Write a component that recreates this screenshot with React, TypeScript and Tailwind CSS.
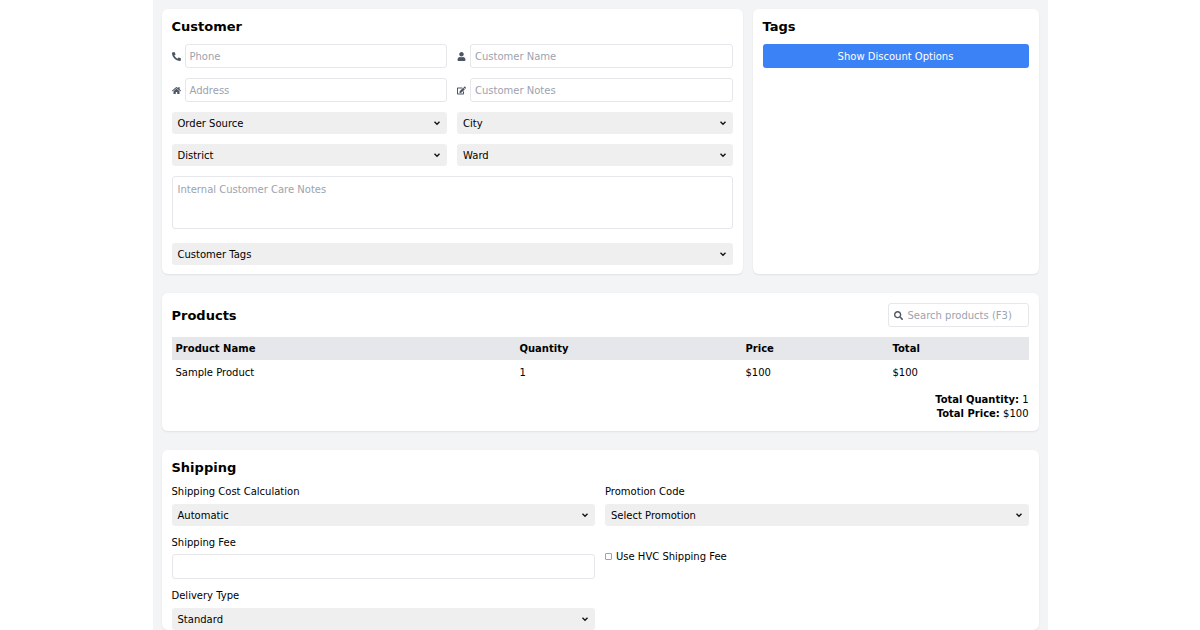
import { FaPhoneAlt, FaUser, FaHome, FaEdit, FaSearch } from "react-icons/fa";

const sel =
  "h-[22px] w-full rounded-[3px] bg-[#efefef] px-[6px] text-[10px] text-black flex items-center justify-between";

function Select({ label }: { label: string }) {
  return (
    <div className={sel}>
      <span>{label}</span>
      <svg width="8" height="8" viewBox="0 0 8 8">
        <path d="M1.5 2.8 L4 5.2 L6.5 2.8" stroke="#111" strokeWidth="1.4" fill="none" />
      </svg>
    </div>
  );
}

function IconInput({ icon: Icon, ph }: { icon: any; ph: string }) {
  return (
    <div className="flex items-center gap-[4px]">
      <Icon className="w-[9px] h-[9px] text-[#4b5563] shrink-0" />
      <div className="h-[24px] flex-1 rounded-[3px] border border-[#e5e7eb] px-[4px] flex items-center text-[10px] text-[#9ca3af]">
        {ph}
      </div>
    </div>
  );
}

const card = "bg-white rounded-[6px] shadow-[0_1px_2px_rgba(0,0,0,0.08)]";

export default function App() {
  return (
    <div
      className="w-[1200px] h-[630px] overflow-hidden bg-white flex justify-center"
      style={{ fontFamily: '"DejaVu Sans", sans-serif' }}
    >
      <div className="w-[895px] bg-[#f3f4f6] px-[9px] pt-[9px] flex flex-col gap-[19px]">
        <div className="grid grid-cols-[581px_1fr] gap-[10px]">
          <div className={`${card} p-[10px] pb-[9px]`}>
            <h2 className="text-[13px] font-bold text-black mt-[1px] mb-[11px] leading-none">Customer</h2>
            <div className="grid grid-cols-2 gap-x-[10px] gap-y-[10px]">
              <IconInput icon={FaPhoneAlt} ph="Phone" />
              <IconInput icon={FaUser} ph="Customer Name" />
              <IconInput icon={FaHome} ph="Address" />
              <IconInput icon={FaEdit} ph="Customer Notes" />
              <Select label="Order Source" />
              <Select label="City" />
              <Select label="District" />
              <Select label="Ward" />
              <div className="col-span-2 h-[53px] rounded-[3px] border border-[#e5e7eb] px-[5px] pt-[5px] text-[10px] text-[#9ca3af]">
                Internal Customer Care Notes
              </div>
              <div className="col-span-2 mt-[4px]">
                <Select label="Customer Tags" />
              </div>
            </div>
          </div>
          <div className={`${card} p-[10px]`}>
            <h2 className="text-[13px] font-bold text-black mt-[1px] mb-[11px] leading-none">Tags</h2>
            <div className="h-[24px] rounded-[3px] bg-[#3b82f6] text-white text-[10px] flex items-center justify-center">
              Show Discount Options
            </div>
          </div>
        </div>

        <div className={`${card} px-[10px] pt-[10px] pb-[10px]`}>
          <div className="flex items-center justify-between h-[24px] mb-[10px]">
            <h2 className="text-[13px] font-bold text-black leading-none">Products</h2>
            <div className="w-[141px] h-[24px] rounded-[3px] border border-[#e5e7eb] flex items-center gap-[5px] px-[5px] text-[10px] text-[#9ca3af]">
              <FaSearch className="w-[9px] h-[9px] text-[#4b5563]" />
              Search products (F3)
            </div>
          </div>
          <div className="grid grid-cols-[344px_226px_147px_1fr] bg-[#e5e7eb] h-[23px] items-center px-[4px] text-[10px] font-bold text-black">
            <span>Product Name</span>
            <span>Quantity</span>
            <span>Price</span>
            <span>Total</span>
          </div>
          <div className="grid grid-cols-[344px_226px_147px_1fr] h-[24px] items-center px-[4px] text-[10px] text-black">
            <span>Sample Product</span>
            <span>1</span>
            <span>$100</span>
            <span>$100</span>
          </div>
          <div className="mt-[9px] text-right text-[10px] text-black leading-[14px]">
            <div><b>Total Quantity:</b> 1</div>
            <div><b>Total Price:</b> $100</div>
          </div>
        </div>

        <div className={`${card} px-[10px] pt-[10px] flex-1`}>
          <h2 className="text-[13px] font-bold text-black mt-[1px] mb-[10px] leading-none">Shipping</h2>
          <div className="grid grid-cols-2 gap-x-[10px] text-[10px] text-black">
            <div className="flex flex-col">
              <span className="mb-[5px]">Shipping Cost Calculation</span>
              <Select label="Automatic" />
              <span className="mt-[9px] mb-[4px]">Shipping Fee</span>
              <div className="h-[25px] rounded-[3px] border border-[#e5e7eb]" />
              <span className="mt-[9px] mb-[5px]">Delivery Type</span>
              <Select label="Standard" />
            </div>
            <div className="flex flex-col">
              <span className="mb-[5px]">Promotion Code</span>
              <Select label="Select Promotion" />
              <label className="flex items-center gap-[4px] mt-[23px]">
                <span className="w-[7px] h-[7px] border border-[#9ca3af] rounded-[1px]" />
                Use HVC Shipping Fee
              </label>
            </div>
          </div>
        </div>
      </div>
    </div>
  );
}
